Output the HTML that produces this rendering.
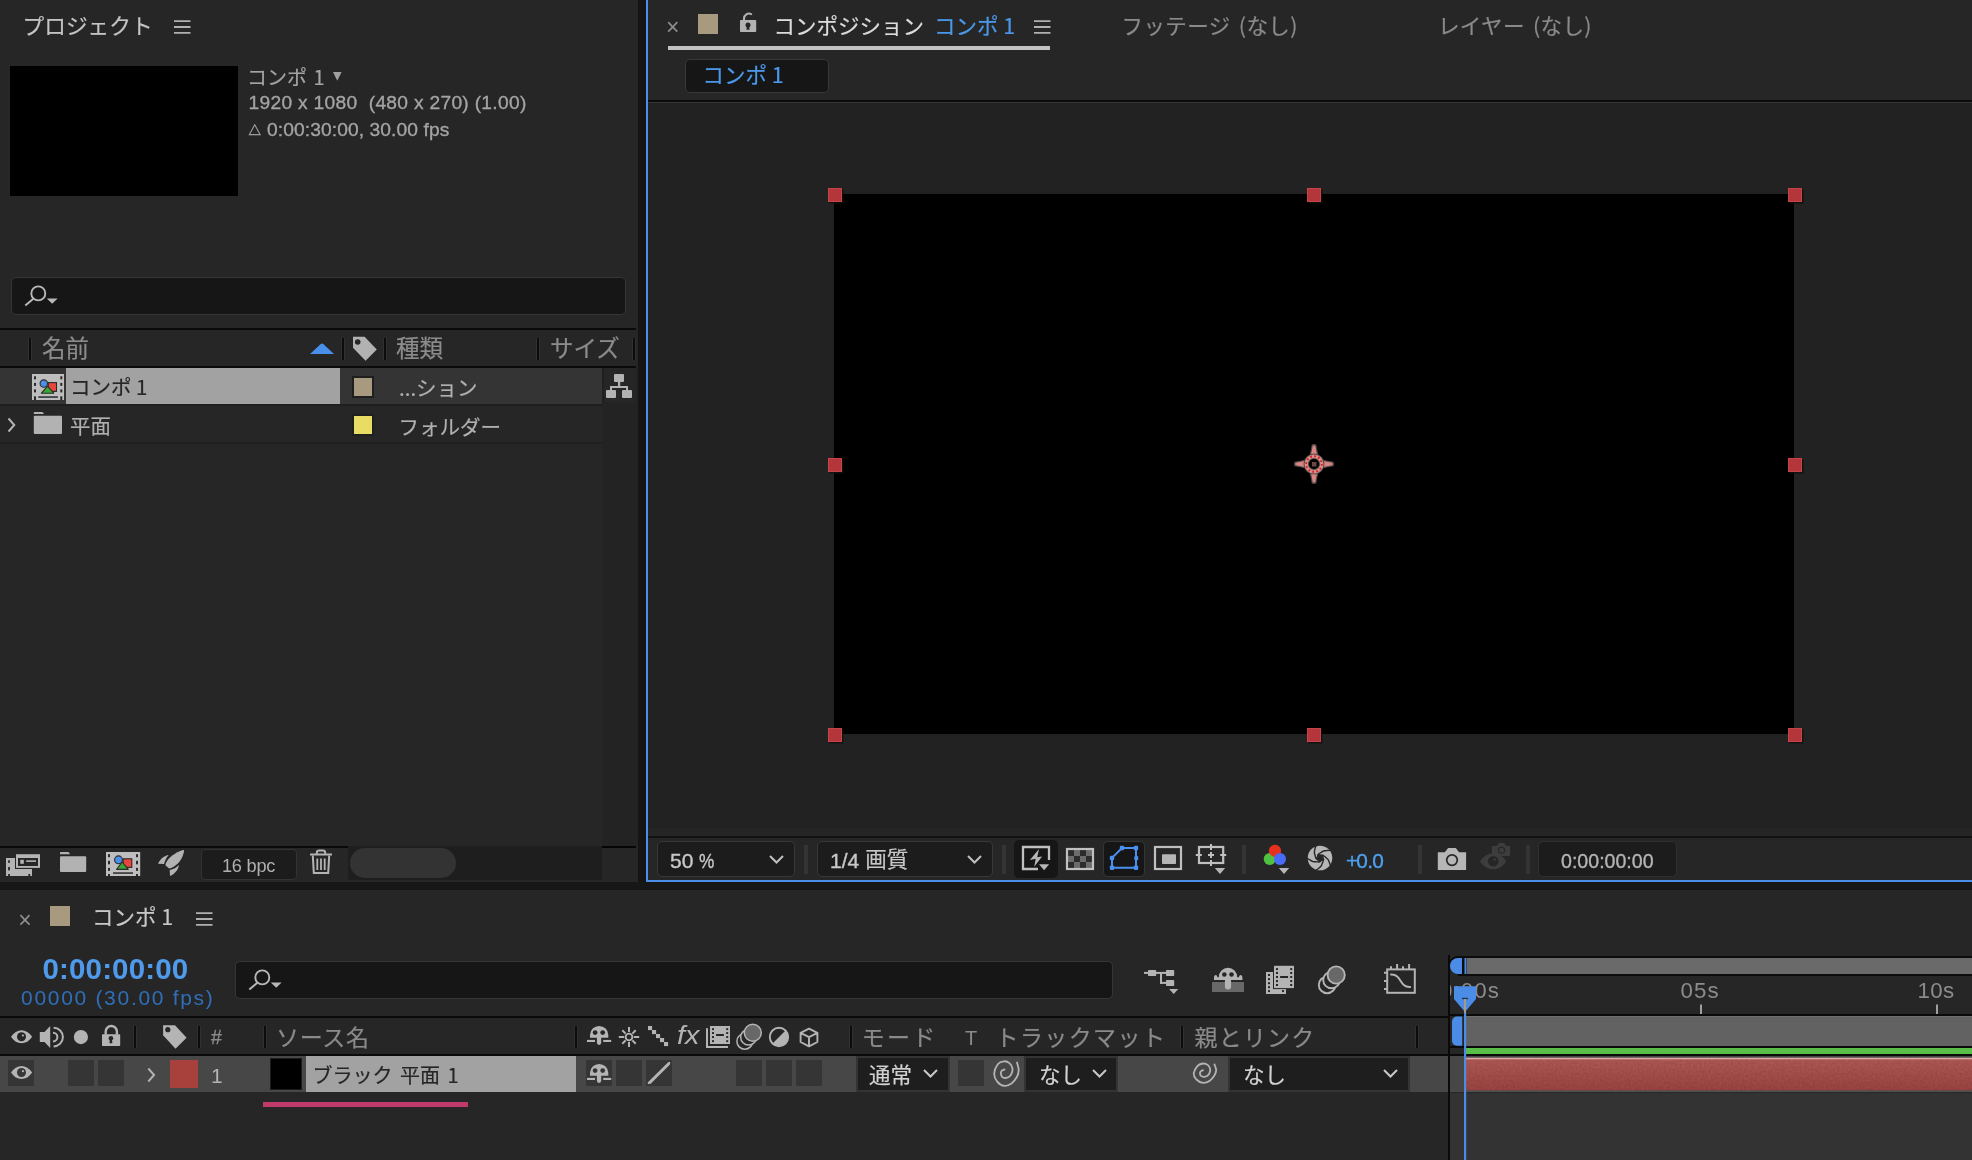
<!DOCTYPE html>
<html lang="ja">
<head>
<meta charset="utf-8">
<title>After Effects</title>
<style>
*{box-sizing:border-box;margin:0;padding:0}
html,body{width:1972px;height:1160px;overflow:hidden;background:#262626}
body{position:relative;font-family:"Liberation Sans","Noto Sans CJK JP",sans-serif;color:#a8a8a8;-webkit-font-smoothing:antialiased}
.a{position:absolute}
.t{position:absolute;white-space:nowrap;line-height:1}
.ac{font-family:"Noto Sans CJK JP","Liberation Sans",sans-serif}
.hv{-webkit-text-stroke:0.350px currentColor}
.jp{-webkit-text-stroke:0.200px currentColor;font-family:"Noto Sans CJK JP","Liberation Sans",sans-serif}
svg{position:absolute;overflow:visible}
.sep{position:absolute;width:4px;margin-left:-1px;background:#0c0c0c;border-left:1px solid #303030;border-right:1px solid #303030}
.rl{font-size:22.300px;color:#8c8c8c;letter-spacing:1.100px}
.sw{position:absolute;width:26px;height:26px;background:#353535}
</style>
</head>
<body>
<div id="root" style="position:absolute;left:0;top:0;width:1972px;height:1160px;will-change:transform">

<!-- ================= PROJECT PANEL ================= -->
<div class="a" id="proj" style="left:0;top:0;width:638px;height:882px;background:#262626"></div>
<div class="t jp" style="left:22.500px;top:13.500px;font-size:21.700px;color:#c4c4c4">プロジェクト</div>
<svg style="left:174px;top:20px" width="17" height="14"><path d="M0 1.2h16.5M0 7h16.5M0 12.8h16.5" stroke="#b0b0b0" stroke-width="1.8" fill="none"/></svg>

<div class="a" style="left:10px;top:66px;width:228px;height:130px;background:#000"></div>
<div class="t jp" id="pname" style="left:247px;top:66.500px;font-size:20px;color:#a4a4a4;word-spacing:2px">コンポ 1</div>
<div class="t hv" id="info1" style="left:248.500px;top:93px;font-size:19.200px;color:#a4a4a4;letter-spacing:0.300px">1920 x 1080&nbsp; (480 x 270) (1.00)</div>
<div class="t hv" id="info2" style="left:267px;top:119.500px;font-size:19.200px;color:#a4a4a4;letter-spacing:0.100px">0:00:30:00, 30.00 fps</div>

<div class="t jp" id="tri" style="left:248.500px;top:124px;font-size:12.500px;color:#a4a4a4;-webkit-text-stroke:0.400px #a4a4a4">△</div>
<svg style="left:333px;top:72px" width="9" height="9"><path d="M0 0h8.600l-4.300 8.800z" fill="#a0a0a0"/></svg>
<!-- search -->
<div class="a" style="left:11px;top:277px;width:615px;height:38px;background:#161616;border:1px solid #353535;border-radius:5px"></div>
<svg style="left:24px;top:283px" width="36" height="24"><circle cx="14.300" cy="10.400" r="7" stroke="#b8b8b8" stroke-width="1.900" fill="none"/><path d="M9.300 15.700L1.300 22.500" stroke="#b8b8b8" stroke-width="2" fill="none"/><path d="M22.800 15.500h10.800l-5.400 5.300z" fill="#b8b8b8"/></svg>

<!-- column header -->
<div class="a" style="left:0;top:328px;width:636px;height:2px;background:#0a0a0a"></div>
<div class="a" style="left:0;top:366px;width:636px;height:2px;background:#0a0a0a"></div>
<div class="sep" style="left:29px;top:338px;height:22px"></div>
<div class="t jp" style="left:42px;top:336px;font-size:23.5px;color:#8c8c8c">名前</div>
<svg style="left:310px;top:343px" width="24" height="11"><path d="M0 11L10.5 1.2Q12 0 13.500 1.200L24 11z" fill="#4a8fea"/></svg>
<div class="sep" style="left:342px;top:338px;height:22px"></div>
<svg style="left:352px;top:336px" width="26" height="26" viewBox="0 0 26 26"><path d="M1 .8h11.600l12.200 12.600-11.200 11.300-12.600-12.900z" fill="#b2b2b2"/><circle cx="5.700" cy="6" r="2.800" fill="#262626"/></svg>
<div class="sep" style="left:384px;top:338px;height:22px"></div>
<div class="t jp" style="left:396px;top:336px;font-size:23.5px;color:#8c8c8c">種類</div>
<div class="sep" style="left:537px;top:338px;height:22px"></div>
<div class="t jp" style="left:550px;top:336px;font-size:23.5px;color:#8c8c8c">サイズ</div>
<div class="sep" style="left:633px;top:338px;height:22px"></div>

<!-- rows -->
<div class="a" style="left:602px;top:368px;width:36px;height:478px;background:#232323"></div><div class="a" style="left:602px;top:368px;width:2px;height:34px;background:#1f1f1f"></div><div class="a" style="left:604px;top:368px;width:32px;height:34px;background:#262626"></div>
<div class="a" style="left:0;top:368px;width:602px;height:36px;background:#343434"></div>
<div class="a" style="left:66px;top:368px;width:274px;height:36px;background:#a2a2a2"></div>
<div class="a" style="left:0;top:404px;width:602px;height:2px;background:#1f1f1f"></div>
<div class="a" style="left:0;top:442px;width:602px;height:2px;background:#202020"></div>
<div class="t jp" style="left:70px;top:376px;font-size:20.500px;color:#262626">コンポ 1</div>
<div class="t jp" style="left:70px;top:414.500px;font-size:20.500px;color:#b0b0b0">平面</div>
<div class="a" style="left:352px;top:376px;width:22px;height:22px;background:#a89a7e;border:2px solid #1f1f1f"></div>
<div class="a" style="left:352px;top:414px;width:22px;height:22px;background:#e8dc64;border:2px solid #1f1f1f"></div>
<div class="t jp" style="left:399px;top:377px;font-size:20.500px;color:#b0b0b0">...ション</div>
<div class="t jp" style="left:398.500px;top:415.500px;font-size:20.500px;color:#b0b0b0">フォルダー</div>
<!--ICONS-PROJ-ROWS-->

<!-- bottom toolbar -->
<div class="a" style="left:0;top:846px;width:348px;height:2px;background:#0a0a0a"></div>
<div class="a" style="left:602px;top:846px;width:34px;height:2px;background:#050505"></div>
<div class="a" style="left:348px;top:846px;width:254px;height:34px;background:#1e1e1e"></div>
<div class="a" style="left:350px;top:848px;width:106px;height:30px;background:#333;border-radius:15px"></div>
<div class="a" style="left:201px;top:849px;width:96px;height:31px;background:#1c1c1c;border:1px solid #333;border-radius:4px"></div>
<div class="t" id="bpc" style="left:222px;top:856.500px;font-size:18.200px;color:#b0b0b0;letter-spacing:-0.250px">16 bpc</div>
<!--ICONS-PROJ-BOTTOM-->

<!-- gaps -->
<div class="a" style="left:638px;top:0;width:8px;height:882px;background:#151515"></div>
<div class="a" style="left:0;top:882px;width:1972px;height:8px;background:#171717"></div>

<!-- ================= COMP PANEL ================= -->
<div class="a" id="comp" style="left:646px;top:0;width:1326px;height:882px;background:#262626;border-left:2px solid #4a8fea;border-bottom:2px solid #4a8fea"></div>
<div class="a" style="left:648px;top:102px;width:1324px;height:734px;background:#222"></div>
<div class="a" style="left:648px;top:100px;width:1324px;height:2px;background:#0c0c0c"></div><div class="a" style="left:648px;top:102px;width:1324px;height:1px;background:#363636"></div>
<div class="a" style="left:648px;top:828px;width:1324px;height:8px;background:#252525"></div>
<div class="a" style="left:648px;top:836px;width:1324px;height:2px;background:#121212"></div>

<!-- tab header -->
<div class="t" style="left:666px;top:16px;font-size:23px;color:#8e8e8e">×</div>
<div class="a" style="left:698px;top:14px;width:20px;height:20px;background:#a89a7e"></div>
<div class="t jp" style="left:773.500px;top:13.500px;font-size:21.500px;color:#dcdcdc">コンポジション</div>
<div class="t jp" style="left:934px;top:13.500px;font-size:21.500px;color:#4a98ea">コンポ 1</div>
<svg style="left:1034px;top:20px" width="17" height="14"><path d="M0 1.2h16.5M0 7h16.5M0 12.8h16.5" stroke="#b0b0b0" stroke-width="1.8" fill="none"/></svg>
<div class="a" style="left:668px;top:46px;width:382px;height:4px;background:#c2c2c2"></div>
<div class="t jp" style="left:1121.500px;top:14px;font-size:21.500px;color:#8a8a8a;word-spacing:3px;letter-spacing:0.400px">フッテージ (なし)</div>
<div class="t jp" style="left:1438px;top:14px;font-size:21.500px;color:#8a8a8a;word-spacing:3px;letter-spacing:0.350px">レイヤー (なし)</div>
<div class="a" style="left:685px;top:59px;width:144px;height:34px;background:#161616;border:1px solid #383838;border-radius:5px"></div>
<div class="t jp" style="left:702.500px;top:62.500px;font-size:21.500px;color:#4a98ea">コンポ 1</div>

<!-- viewer -->
<div class="a" style="left:834px;top:194px;width:960px;height:540px;background:#000"></div>
<!--HANDLES-->

<!-- viewer toolbar -->
<div class="a" style="left:657px;top:841px;width:138px;height:36px;background:#1c1c1c;border:1px solid #383838;border-radius:5px"></div>
<div class="t hv" id="zoomv" style="left:670px;top:850px;font-size:21px;color:#c8c8c8">50<span style="display:inline-block;margin-left:5.500px;transform:scaleX(0.820);transform-origin:0 50%">%</span></div>
<svg style="left:769px;top:855px" width="16" height="9"><path d="M1 1l6.500 6.500L14 1" stroke="#c0c0c0" stroke-width="2" fill="none"/></svg>
<div class="a" style="left:804px;top:845px;width:3.600px;height:29px;background:#343434"></div>
<div class="a" style="left:817px;top:841px;width:176px;height:36px;background:#1c1c1c;border:1px solid #383838;border-radius:5px"></div>
<div class="t hv" id="qual" style="left:830px;top:848px;font-size:21px;color:#c8c8c8">1/4<span class="jp" style="margin-left:6px;position:relative;top:-1px;font-size:21.500px">画質</span></div>
<svg style="left:967px;top:855px" width="16" height="9"><path d="M1 1l6.500 6.500L14 1" stroke="#c0c0c0" stroke-width="2" fill="none"/></svg>
<div class="a" style="left:1002px;top:845px;width:3.600px;height:29px;background:#343434"></div>
<div class="a" style="left:1014px;top:840px;width:44px;height:38px;background:#161616;border-radius:5px"></div>
<div class="a" style="left:1103px;top:841px;width:42px;height:36px;background:#161616;border:1px solid #353535;border-radius:5px"></div>
<div class="a" style="left:1242px;top:845px;width:3.600px;height:29px;background:#343434"></div>
<div class="t hv" id="expv" style="left:1346px;top:850.500px;font-size:20.800px;color:#4da0f0;letter-spacing:-0.700px"><span style="margin-right:-1.200px">+</span>0.0</div>
<div class="a" style="left:1418px;top:845px;width:3.600px;height:29px;background:#343434"></div>
<div class="a" style="left:1526px;top:845px;width:3.600px;height:29px;background:#343434"></div>
<div class="a" style="left:1538px;top:841px;width:139px;height:36px;background:#1c1c1c;border:1px solid #303030;border-radius:5px"></div>
<div class="t hv" id="tcv" style="left:1561px;top:852px;font-size:19.600px;color:#b4b4b4">0:00:00:00</div>
<!--ICONS-VIEWER-->

<!-- ================= TIMELINE PANEL ================= -->
<div class="a" id="tl" style="left:0;top:890px;width:1972px;height:270px;background:#262626"></div>
<div class="t" style="left:18.200px;top:908.500px;font-size:23px;color:#8e8e8e">×</div>
<div class="a" style="left:50px;top:906px;width:20px;height:20px;background:#a89a7e"></div>
<div class="t jp" style="left:92px;top:905px;font-size:21.500px;color:#c8c8c8">コンポ 1</div>
<svg style="left:196px;top:912px" width="17" height="14"><path d="M0 1.2h16.5M0 7h16.5M0 12.8h16.5" stroke="#b0b0b0" stroke-width="1.8" fill="none"/></svg>
<div class="t" id="tc1" style="left:42.500px;top:953.500px;font-size:29.500px;font-weight:bold;color:#4f9aeb;letter-spacing:0.150px">0:00:00:00</div>
<div class="t" id="tc2" style="left:21px;top:986.500px;font-size:21px;color:#2f6fb8;letter-spacing:1.700px">00000 (30.00 fps)</div>
<div class="a" style="left:235px;top:961px;width:878px;height:38px;background:#161616;border:1px solid #353535;border-radius:5px"></div>
<svg style="left:248px;top:967px" width="36" height="24"><circle cx="14.300" cy="10.400" r="7" stroke="#b8b8b8" stroke-width="1.900" fill="none"/><path d="M9.300 15.700L1.300 22.500" stroke="#b8b8b8" stroke-width="2" fill="none"/><path d="M22.800 15.500h10.800l-5.400 5.300z" fill="#b8b8b8"/></svg>
<!--ICONS-TL-TOP-->

<!-- header row -->
<div class="a" style="left:0;top:1016px;width:1448px;height:2px;background:#0a0a0a"></div>
<div class="a" style="left:0;top:1054px;width:1448px;height:2px;background:#0a0a0a"></div>
<div class="sep" style="left:134px;top:1026px;height:22px"></div>
<div class="sep" style="left:198px;top:1026px;height:22px"></div>
<div class="t hv" style="left:211px;top:1028px;font-size:19.500px;color:#8a8a8a">#</div>
<div class="sep" style="left:264px;top:1026px;height:22px"></div>
<div class="t jp" style="left:276px;top:1025px;font-size:23px;color:#8a8a8a;letter-spacing:0.700px">ソース名</div>
<div class="sep" style="left:575px;top:1026px;height:22px"></div>
<div class="sep" style="left:850px;top:1026px;height:22px"></div>
<div class="t jp" style="left:861.800px;top:1025px;font-size:23px;color:#8a8a8a;letter-spacing:2.200px">モード</div>
<div class="t" style="left:965px;top:1028px;font-size:20px;color:#8a8a8a">T</div>
<div class="t jp" style="left:995.500px;top:1025px;font-size:23px;color:#8a8a8a;letter-spacing:1.400px">トラックマット</div>
<div class="sep" style="left:1181px;top:1026px;height:22px"></div>
<div class="t jp" style="left:1194.500px;top:1025px;font-size:23px;color:#8a8a8a;letter-spacing:1.200px">親とリンク</div>
<div class="sep" style="left:1416px;top:1026px;height:22px"></div>
<!--ICONS-TL-HEAD-->

<!-- layer row -->
<div class="a" style="left:0;top:1056px;width:1448px;height:36px;background:#474747"></div>
<div class="sw" style="left:8px;top:1060px"></div>
<div class="sw" style="left:68px;top:1060px"></div>
<div class="sw" style="left:98px;top:1060px"></div>
<svg style="left:147px;top:1067px" width="10" height="17"><path d="M1.300 1.500l5.800 6.500-5.800 6.500" stroke="#b4b4b4" stroke-width="1.900" fill="none"/></svg>
<div class="a" style="left:170px;top:1060px;width:28px;height:28px;background:#a8403c"></div>
<div class="t" style="left:211px;top:1065px;font-size:21px;color:#b4b4b4">1</div>
<div class="a" style="left:270px;top:1058px;width:32px;height:32px;background:#000;border:1px solid #1c1c1c"></div>
<div class="a" style="left:306px;top:1056px;width:270px;height:36px;background:#a2a2a2"></div>
<div class="t jp" style="left:312.500px;top:1065px;font-size:20px;color:#262626;word-spacing:3px">ブラック 平面 1</div>
<div class="a" style="left:263px;top:1102px;width:205px;height:5px;background:#c0396b"></div>
<div class="sw" style="left:586px;top:1060px"></div>
<div class="sw" style="left:616px;top:1060px"></div>
<div class="sw" style="left:646px;top:1060px"></div>
<div class="sw" style="left:736px;top:1060px"></div>
<div class="sw" style="left:766px;top:1060px"></div>
<div class="sw" style="left:796px;top:1060px"></div>
<svg style="left:646px;top:1060px" width="26" height="26"><path d="M3.5 23L23 3.500" stroke="#b4b4b4" stroke-width="2.600" fill="none"/></svg>
<div class="a" style="left:856px;top:1056px;width:94px;height:36px;background:#1e1e1e;border:2px solid #343434"></div>
<div class="t jp" style="left:869px;top:1063px;font-size:21.500px;color:#d2d2d2">通常</div>
<svg style="left:923px;top:1069px" width="16" height="9"><path d="M1 1l6.500 6.500L14 1" stroke="#c8c8c8" stroke-width="2" fill="none"/></svg>

<div class="sw" style="left:958px;top:1060px"></div>
<div class="a" style="left:1024px;top:1056px;width:94px;height:36px;background:#1e1e1e;border:2px solid #343434"></div>
<div class="t jp" style="left:1039px;top:1063px;font-size:21.500px;color:#d2d2d2">なし</div>
<svg style="left:1092px;top:1069px" width="16" height="9"><path d="M1 1l6.500 6.500L14 1" stroke="#c8c8c8" stroke-width="2" fill="none"/></svg>
<div class="a" style="left:1228px;top:1056px;width:182px;height:36px;background:#1e1e1e;border:2px solid #343434"></div>
<div class="t jp" style="left:1243px;top:1063px;font-size:21.500px;color:#d2d2d2">なし</div>
<svg style="left:1383px;top:1069px" width="16" height="9"><path d="M1 1l6.500 6.500L14 1" stroke="#c8c8c8" stroke-width="2" fill="none"/></svg>
<!--ICONS-TL-ROW-->

<!-- time area -->
<div class="a" style="left:1450px;top:955px;width:522px;height:205px;background:#262626"></div>
<div class="a" style="left:1450px;top:1092px;width:522px;height:68px;background:#333"></div>
<div class="a" style="left:1448px;top:955px;width:2px;height:205px;background:#0a0a0a"></div>
<div class="a" style="left:1450px;top:976px;width:522px;height:38px;overflow:hidden"><div class="t rl" style="left:-10px;top:4px">0:00s</div><div class="t rl" style="left:230.500px;top:4px">05s</div><div class="t rl" style="left:467.500px;top:4px;letter-spacing:0.300px">10s</div></div>
<svg id="ov" style="left:0;top:0" width="1972" height="1160" viewBox="0 0 1972 1160">
<defs>
<filter id="noise" x="0" y="0" width="100%" height="100%"><feTurbulence type="fractalNoise" baseFrequency="0.45" numOctaves="1" seed="3" result="n"/><feColorMatrix in="n" type="matrix" values="0 0 0 0 0  0 0 0 0 0  0 0 0 0 0  0.5 0 0 0 -0.13"/><feComposite in2="SourceGraphic" operator="in"/></filter>
<linearGradient id="rg" x1="0" y1="0" x2="0" y2="1"><stop offset="0" stop-color="#b25a56"/><stop offset="1" stop-color="#9c4442"/></linearGradient>
</defs>
<!-- ===== project rows ===== -->
<g id="ci1">
<rect x="32" y="374" width="32" height="26" fill="#bebebe"/>
<g fill="#2a2a2a"><rect x="34" y="376.300" width="2" height="3"/><rect x="34" y="382.900" width="2" height="3"/><rect x="34" y="389.400" width="2" height="3"/><rect x="34" y="396.300" width="2" height="3.700"/>
<rect x="60.300" y="376.300" width="2" height="3"/><rect x="60.300" y="382.900" width="2" height="3"/><rect x="60.300" y="389.400" width="2" height="3"/><rect x="60.300" y="396.300" width="2" height="3.700"/>
<rect x="38.300" y="396.300" width="19.600" height="1.500"/></g>
<rect x="48.300" y="382.600" width="8.200" height="8.800" fill="#e8463c" stroke="#2a2a2a" stroke-width="1.100"/>
<circle cx="43.800" cy="383.600" r="3.700" fill="#4a90ea" stroke="#2a2a2a" stroke-width="1.100"/>
<path d="M47.600 386.200L53.800 393.200H41.400z" fill="#3aa636" stroke="#2a2a2a" stroke-width="1.100" stroke-linejoin="round"/>
</g>
<path d="M33.800 414v-1.200q0-.9.900-.9h7.300q.7 0 1.100.6l.9 1.500z" fill="#b2b2b2"/>
<rect x="33.800" y="415.700" width="28.200" height="18.300" rx="1" fill="#b2b2b2"/>
<path d="M8.500 418.500l5.800 6.500-5.800 6.500" stroke="#b4b4b4" stroke-width="2" fill="none"/>
<!-- flowchart -->
<g fill="#b2b2b2"><rect x="614" y="374" width="10" height="8" rx="1"/><rect x="606" y="390" width="10" height="8" rx="1"/><rect x="622" y="390" width="10" height="8" rx="1"/>
<rect x="618" y="381" width="2.200" height="6"/><rect x="610" y="386" width="18" height="2"/><rect x="610" y="386" width="2" height="5"/><rect x="626" y="386" width="2" height="5"/></g>

<!-- ===== project bottom toolbar ===== -->
<g id="if">
<path d="M6 858h9v11h17v7h-26z" fill="#b4b4b4"/>
<g fill="#262626"><rect x="8.100" y="860.300" width="1.800" height="2.500"/><rect x="8.100" y="866.900" width="1.800" height="3.500"/><rect x="8.100" y="874" width="1.800" height="2"/><rect x="28.400" y="874" width="1.800" height="2"/></g>
<rect x="15" y="853.200" width="26" height="15.700" fill="#262626"/>
<rect x="16" y="854.200" width="24" height="13.700" fill="#b4b4b4"/>
<rect x="18" y="858" width="20" height="8" fill="#262626"/>
<rect x="20.300" y="859.800" width="3.500" height="4" fill="#b4b4b4"/><rect x="26.200" y="860.300" width="9.800" height="1.600" fill="#b4b4b4"/>
</g>
<path d="M60 854.200v-1.300q0-.9.900-.9h7.100q.7 0 1.100.6l.9 1.600z" fill="#b2b2b2"/>
<rect x="60" y="856.200" width="26.200" height="15.800" rx="1" fill="#b2b2b2"/>
<g id="ci2">
<rect x="106" y="852" width="34.200" height="24" fill="#bebebe"/>
<g fill="#2a2a2a"><rect x="108" y="854.200" width="2" height="3"/><rect x="108" y="860.800" width="2" height="3.500"/><rect x="108" y="867.900" width="2" height="3"/><rect x="108" y="874" width="2" height="2"/>
<rect x="136" y="854.200" width="2" height="3"/><rect x="136" y="860.800" width="2" height="3.500"/><rect x="136" y="867.900" width="2" height="3"/><rect x="136" y="874" width="2" height="2"/>
<rect x="113" y="872.300" width="20" height="1.500"/></g>
<rect x="123.200" y="858.800" width="8.600" height="8.600" fill="#e8463c" stroke="#2a2a2a" stroke-width="1.100"/>
<circle cx="118.500" cy="859.800" r="3.900" fill="#4a90ea" stroke="#2a2a2a" stroke-width="1.100"/>
<path d="M122.200 862L128.300 869.400H116.600z" fill="#3aa636" stroke="#2a2a2a" stroke-width="1.100" stroke-linejoin="round"/>
</g>
<!-- rocket -->
<g fill="#b2b2b2">
<path d="M184.100 849.900C179 850.300 170.500 855.500 167 861C166 862.700 165.600 864 165.400 865.300L169 868.600C172 868 174.500 866.500 176.900 864.300C181 860.500 183.800 855 184.100 849.900z"/>
<path d="M158 863.700C159.300 861 161 859 162.500 857.800C164.500 856.300 166.500 855.400 168.700 855.100C167.300 856.500 166.300 858 165.700 859.400C165 861 164.400 862.500 164.100 864z"/>
<path d="M170 876L169.700 869.900C173.500 869.300 176.500 867.500 178.900 865C178.800 866.800 178.200 868.500 177.200 869.900C175.500 872.500 173 874.600 170 876z"/>
</g>
<!-- trash -->
<g stroke="#b4b4b4" fill="none" stroke-width="2"><path d="M310 854.500h22"/><path d="M316.800 854v-1.200a2.400 2.400 0 0 1 2.400-2.400h3.600a2.400 2.400 0 0 1 2.400 2.400v1.200"/><path d="M312.800 855.500l1 17.500h14.400l1-17.500"/><path d="M317.300 858.500v11.500M321 858.500v11.500M324.700 858.500v11.500" stroke-width="1.800"/></g>

<!-- ===== tab headers ===== -->
<g><rect x="740" y="20" width="16.200" height="12" rx="0.800" fill="#b2b2b2"/><path d="M744 20.500V18.600A5 5 0 0 1 751.200 14.100" stroke="#b2b2b2" stroke-width="2.100" fill="none" stroke-linecap="round"/><circle cx="748" cy="25" r="2.500" fill="#262626"/><path d="M746.900 25.500h2.200l.5 4.300h-3.200z" fill="#262626"/></g>
<!-- ===== viewer handles ===== -->
<g fill="#101010" opacity="0.85"><rect x="829.5" y="189.5" width="14" height="14"/><rect x="1308.5" y="189.5" width="14" height="14"/><rect x="1789.5" y="189.5" width="14" height="14"/><rect x="829.5" y="459.5" width="14" height="14"/><rect x="1789.5" y="459.5" width="14" height="14"/><rect x="829.5" y="729.5" width="14" height="14"/><rect x="1308.5" y="729.5" width="14" height="14"/><rect x="1789.5" y="729.5" width="14" height="14"/></g>
<g fill="#b4363a" stroke="#c84448" stroke-width="1">
<rect x="828.500" y="188.500" width="13" height="13"/><rect x="1307.500" y="188.500" width="13" height="13"/><rect x="1788.500" y="188.500" width="13" height="13"/>
<rect x="828.500" y="458.500" width="13" height="13"/><rect x="1788.500" y="458.500" width="13" height="13"/>
<rect x="828.500" y="728.500" width="13" height="13"/><rect x="1307.500" y="728.500" width="13" height="13"/><rect x="1788.500" y="728.500" width="13" height="13"/>
</g>
<!-- anchor -->
<g>
<g fill="#d88482" stroke="#4e4848" stroke-width="1.200" stroke-linejoin="round">
<path d="M1312.300 444.800h3.400l2.300 12h-8z"/><path d="M1312.300 483.200h3.400l2.300-12h-8z"/><path d="M1294.800 462.300v3.400l12 2.300v-8z"/><path d="M1333.200 462.300v3.400l-12 2.300v-8z"/></g>
<circle cx="1314" cy="464" r="7.800" stroke="#4e4848" stroke-width="5.400" fill="none"/>
<circle cx="1314" cy="464" r="7.800" stroke="#dc8a88" stroke-width="3.400" fill="none"/>
<circle cx="1314" cy="464" r="7.800" stroke="#c82222" stroke-width="1.900" stroke-dasharray="1.700 2.380" fill="none"/>
<rect x="1312" y="462" width="4.500" height="4.500" fill="#6a4644"/>
</g>

<!-- ===== viewer toolbar icons ===== -->
<path d="M1038 869h-15v-22h26v13" stroke="#c0c0c0" stroke-width="2.300" fill="none"/>
<path d="M1039 849.100l-9.100 10.900 5.800-1.200-1.500 7.900 7.900-10.300-4.900 .9z" fill="#b6b6b6"/>
<path d="M1039 864.200h10.200l-5.100 6z" fill="#b6b6b6"/>
<g>
<rect x="1067" y="849" width="26" height="20" fill="#2c2c2c"/>
<g fill="#6c6c6c"><rect x="1074" y="850" width="6" height="6"/><rect x="1086" y="850" width="6" height="6"/><rect x="1068" y="856" width="6" height="6"/><rect x="1080" y="856" width="6" height="6"/><rect x="1074" y="862" width="6" height="6"/><rect x="1086" y="862" width="6" height="6"/></g>
<rect x="1067" y="849" width="26" height="20" fill="none" stroke="#c0c0c0" stroke-width="2.200"/>
</g>
<g stroke="#4a90f0" fill="#4a90f0"><path d="M1122 848h14v19.800h-24v-9.900z" fill="none" stroke-width="2"/>
<g stroke="none"><rect x="1119.800" y="845.800" width="4.400" height="4.400" rx="1.200"/><rect x="1133.800" y="845.800" width="4.400" height="4.400" rx="1.200"/><rect x="1134.300" y="855.900" width="3.900" height="4.400" rx="1"/><rect x="1133.800" y="865.600" width="4.400" height="4.400" rx="1.200"/><rect x="1109.800" y="865.600" width="4.400" height="4.400" rx="1.200"/><rect x="1109.800" y="855.700" width="4.400" height="4.400" rx="1.200"/></g></g>
<rect x="1155" y="847" width="26" height="22" fill="none" stroke="#c0c0c0" stroke-width="2.200"/>
<rect x="1162" y="854.300" width="14" height="9.700" rx="0.800" fill="#b6b6b6"/>
<g stroke="#c0c0c0" fill="none" stroke-width="2.200"><rect x="1199" y="847" width="24.200" height="16"/><path d="M1211 844v6M1211 860v6M1195.800 855h6M1220.200 855h6M1211 852v6M1208 855h6" stroke-width="2"/></g>
<path d="M1214.800 868h10.400l-5.200 6z" fill="#b6b6b6"/>
<circle cx="1269.700" cy="859" r="6" fill="#50c040"/><circle cx="1275" cy="850.800" r="6.100" fill="#e8301e"/><circle cx="1280" cy="859" r="6" fill="#4a6af8"/>
<path d="M1278.800 868h10.400l-5.200 6z" fill="#b6b6b6"/>
<!-- aperture -->
<g><circle cx="1320" cy="858" r="12.300" fill="#b6b6b6"/>
<path d="M1315.9 846.1C1315.7 846.6 1315.1 848.4 1314.8 849.4C1314.6 850.5 1314.4 851.5 1314.4 852.4C1314.4 853.3 1314.8 854.3 1315.0 855.0C1315.2 855.8 1315.3 856.3 1315.5 857.0C1315.7 857.6 1316.1 858.6 1316.2 858.9M1330.1 850.4C1329.5 850.4 1327.6 850.4 1326.6 850.5C1325.5 850.5 1324.5 850.6 1323.6 851.0C1322.7 851.3 1322.0 851.9 1321.3 852.3C1320.6 852.8 1320.2 853.0 1319.6 853.4C1319.0 853.8 1318.3 854.5 1318.0 854.7M1330.3 865.2C1330.1 864.7 1329.6 862.9 1329.2 861.9C1328.8 860.9 1328.4 860.0 1327.8 859.2C1327.2 858.5 1326.4 858.0 1325.8 857.5C1325.2 857.0 1324.8 856.6 1324.2 856.2C1323.7 855.8 1322.8 855.2 1322.6 855.1M1316.3 870.0C1316.8 869.7 1318.3 868.7 1319.1 868.0C1319.9 867.3 1320.7 866.6 1321.2 865.8C1321.8 865.0 1322.0 864.1 1322.3 863.3C1322.6 862.6 1322.8 862.1 1323.0 861.5C1323.2 860.8 1323.5 859.8 1323.6 859.5M1307.4 858.2C1307.9 858.6 1309.3 859.7 1310.3 860.2C1311.2 860.8 1312.1 861.3 1313.0 861.6C1313.9 861.8 1314.8 861.7 1315.6 861.8C1316.4 861.9 1317.0 861.9 1317.6 861.9C1318.3 862.0 1319.3 861.9 1319.7 861.9" stroke="#262626" stroke-width="1.400" fill="none" stroke-linecap="round"/>
<path d="M1316.200 858.900L1318 854.700L1322.600 855.100L1323.600 859.500L1319.700 861.900z" fill="#262626" stroke="#262626" stroke-width="1" stroke-linejoin="round"/></g>
<!-- camera -->
<path d="M1437.800 852.200h7l3.300-4.200h7.700l3.300 4.200h7v17.800h-28.300z" fill="#b6b6b6"/>
<circle cx="1452" cy="860.100" r="5.300" fill="#b6b6b6" stroke="#262626" stroke-width="1.700"/>
<!-- eye cam (dim) -->
<g fill="#3d3d3d"><path d="M1492 846.100h5l1.800-3h5.500l1.800 3h4v9.800h-18.100z"/><circle cx="1501.500" cy="850.200" r="3.600" fill="#262626"/><circle cx="1501.500" cy="850.200" r="2.500"/>
<path d="M1480 861.200C1487 850.500 1499.500 850.500 1506.200 861.200C1499.500 872 1487 872 1480 861.200z"/><circle cx="1493.200" cy="861.200" r="5.300" fill="#262626"/><circle cx="1494.800" cy="859.600" r="1.200"/></g>
<!-- ===== timeline top icons ===== -->
<g fill="#b4b4b4"><rect x="1144" y="971.900" width="5" height="2"/><rect x="1148" y="970" width="8.200" height="6" rx="0.800"/><rect x="1156" y="971.900" width="11" height="2"/><rect x="1166" y="970" width="8.200" height="6" rx="0.800"/><rect x="1160" y="972" width="2" height="11.900"/><rect x="1160" y="981.900" width="7" height="2"/><rect x="1166" y="980.100" width="8.200" height="6" rx="0.800"/><path d="M1169.100 989.100h9.200l-4.600 5z"/></g>
<!-- shy with base -->
<g><rect x="1212" y="982" width="32" height="10" fill="#686868"/>
<path d="M1218.800 977.300a9.200 9.500 0 0 1 18.400 0l1.700 0c.3-1.700 .9-2.400 1.800-2.400s1.600 1 1.700 2.400v2.700h-28.400v-2.700c.1-1.400 .8-2.400 1.700-2.400s1.500 .7 1.800 2.400z" fill="#b4b4b4"/>
<rect x="1224.900" y="978" width="6.200" height="11.600" rx="3" fill="#b4b4b4"/>
<circle cx="1224.300" cy="974.500" r="2.300" fill="#262626"/><circle cx="1231.500" cy="974.500" r="2.300" fill="#262626"/></g>
<!-- film stack -->
<g><path d="M1266 972h8v17h12v5h-20z" fill="#b4b4b4"/>
<g fill="#262626"><rect x="1268" y="974" width="2" height="2"/><rect x="1268" y="978.100" width="2" height="2"/><rect x="1268" y="982.200" width="2" height="2"/><rect x="1268" y="986.200" width="2" height="2"/><rect x="1268" y="990.100" width="2" height="2"/><rect x="1282" y="990.100" width="2" height="2"/></g>
<rect x="1273" y="964.800" width="22" height="24.300" fill="#262626"/>
<rect x="1274" y="965.800" width="20" height="22.300" fill="#b4b4b4"/>
<g fill="#262626"><rect x="1276" y="968.100" width="2" height="2"/><rect x="1276" y="972" width="2" height="2"/><rect x="1276" y="976" width="2" height="2"/><rect x="1276" y="980.100" width="2" height="2"/><rect x="1276" y="984" width="2" height="2"/>
<rect x="1290.200" y="968.100" width="2" height="2"/><rect x="1290.200" y="972" width="2" height="2"/><rect x="1290.200" y="976" width="2" height="2"/><rect x="1290.200" y="980.100" width="2" height="2"/><rect x="1290.200" y="984" width="2" height="2"/>
<rect x="1280.100" y="976" width="8" height="2"/></g></g>
<!-- motion blur -->
<g stroke="#b4b4b4" stroke-width="1.900"><circle cx="1327.100" cy="984.900" r="8.300" fill="#262626"/><circle cx="1331.500" cy="980" r="8.300" fill="#262626"/><circle cx="1336.200" cy="975" r="8.600" fill="#686868"/></g>
<!-- graph editor -->
<g stroke="#b4b4b4" stroke-width="2" fill="none"><rect x="1387.200" y="969.400" width="27.600" height="23.400"/><path d="M1391 966.200v3M1397.100 964v5M1403 966.200v3M1409.100 964v5M1384 972.800h3M1384 981.100h3M1384 988.900h3" /><path d="M1390.200 974.600h1.500C1401.500 974.600 1399.500 987 1409.400 987h1.500"/></g>

<!-- ===== timeline header icons ===== -->
<g id="eye"><path d="M11 1036.800C16.500 1028 26.500 1028 32.200 1036.800C26.500 1045.500 16.500 1045.500 11 1036.800z" fill="#b4b4b4"/><circle cx="21.500" cy="1036.800" r="4.500" fill="#262626"/><circle cx="22.900" cy="1035.500" r="1.100" fill="#b4b4b4"/></g>
<g><path d="M39.800 1032h4.700l5.700-5.900v21.900l-5.700-5.900h-4.700z" fill="#b4b4b4"/><path d="M53.600 1027.700A9.300 9.350 0 0 1 53.600 1046.400M53 1032.700A4.400 4.350 0 0 1 53 1041.400" stroke="#b4b4b4" stroke-width="2" fill="none"/></g>
<circle cx="80.900" cy="1037.100" r="7.100" fill="#b4b4b4"/>
<g><rect x="102" y="1034.300" width="18.200" height="11.700" rx="0.800" fill="#b4b4b4"/><path d="M105.700 1034.800v-3.200a5.600 5.600 0 0 1 11.200 0v3.200" stroke="#b4b4b4" stroke-width="2.400" fill="none"/><circle cx="110.900" cy="1038.300" r="2.300" fill="#262626"/><path d="M109.900 1039h2l.5 4.200h-3z" fill="#262626"/></g>
<path d="M163.100 1025.300h11.900l11.600 12.500-11.100 10.900-12.400-13.400z" fill="#b4b4b4"/><circle cx="167.800" cy="1029.700" r="2.600" fill="#262626"/>

<!-- shy header -->
<g id="shy"><path d="M590 1037.700v-2.700a9.150 9.150 0 0 1 18.300 0v2.700z" fill="#b4b4b4"/><rect x="596.900" y="1035" width="4.300" height="9.900" rx="2.100" fill="#b4b4b4"/><circle cx="595.100" cy="1032.600" r="2.400" fill="#262626"/><circle cx="602.700" cy="1032.600" r="2.400" fill="#262626"/><rect x="587" y="1039.900" width="8" height="2.100" fill="#b4b4b4"/><rect x="603.200" y="1039.900" width="8" height="2.100" fill="#b4b4b4"/></g>
<!-- sun -->
<g stroke="#b4b4b4" fill="none"><circle cx="629" cy="1037" r="3.400" stroke-width="1.900"/><path d="M629 1027v5M629 1042v5M618.800 1037h5.300M633.900 1037h5.300M622.300 1030.300l3.300 3.300M632.400 1040.400l3.300 3.300M635.700 1030.300l-3.300 3.300M625.600 1040.400l-3.300 3.300" stroke-width="2"/></g>
<!-- dotted diag -->
<g fill="#b4b4b4"><rect x="648" y="1026" width="4.100" height="4.100"/><rect x="652" y="1030" width="4.100" height="4.100"/><rect x="656" y="1034" width="4.100" height="4.100"/><rect x="660" y="1038" width="4.100" height="4.100"/><rect x="664" y="1042" width="4.100" height="4.100"/></g>
<text x="677" y="1044.300" font-family="Liberation Sans, sans-serif" font-style="italic" font-size="26.500" fill="#b4b4b4" textLength="22.500" lengthAdjust="spacingAndGlyphs">fx</text>
<!-- frame blend -->
<g><path d="M707 1028.200v18.800h21" stroke="#b4b4b4" stroke-width="2" fill="none"/><rect x="710" y="1026" width="20" height="18" fill="#b4b4b4"/>
<g fill="#262626"><rect x="712" y="1028.200" width="2" height="1.900"/><rect x="712" y="1032.100" width="2" height="1.900"/><rect x="712" y="1036.100" width="2" height="1.900"/><rect x="712" y="1040.200" width="2" height="1.900"/><rect x="726.200" y="1028.200" width="2" height="1.900"/><rect x="726.200" y="1032.100" width="2" height="1.900"/><rect x="726.200" y="1036.100" width="2" height="1.900"/><rect x="726.200" y="1040.200" width="2" height="1.900"/><rect x="716.100" y="1034" width="7.800" height="2"/></g></g>
<!-- motion blur small -->
<g stroke="#b4b4b4" stroke-width="1.500"><circle cx="744.800" cy="1041.300" r="7.900" fill="#262626"/><circle cx="748.600" cy="1037.200" r="7.900" fill="#262626"/><circle cx="752.800" cy="1032.700" r="8.500" fill="#686868"/></g>
<!-- half circle -->
<g><circle cx="779" cy="1037" r="9.200" fill="none" stroke="#b4b4b4" stroke-width="1.900"/><path d="M772.500 1043.500A9.200 9.200 0 0 0 785.500 1030.500z" fill="#b4b4b4"/></g>
<!-- cube -->
<path d="M809 1028.600l8.400 4.200v9.200l-8.400 4.300-8.400-4.300v-9.200zM800.600 1032.800l8.400 4.300 8.400-4.300M809 1037.100v9.200" stroke="#b4b4b4" stroke-width="1.900" fill="none" stroke-linejoin="round"/>

<!-- ===== layer row icons ===== -->
<g transform="translate(0 35.700)"><path d="M11 1036.800C16.500 1028 26.500 1028 32.200 1036.800C26.500 1045.500 16.500 1045.500 11 1036.800z" fill="#b4b4b4"/><circle cx="21.500" cy="1036.800" r="4.500" fill="#373737"/><circle cx="22.900" cy="1035.500" r="1.100" fill="#b4b4b4"/></g>
<g transform="translate(0 38)"><path d="M590 1037.700v-2.700a9.150 9.150 0 0 1 18.300 0v2.700z" fill="#b4b4b4"/><rect x="596.900" y="1035" width="4.300" height="9.900" rx="2.100" fill="#b4b4b4"/><circle cx="595.100" cy="1032.600" r="2.400" fill="#333"/><circle cx="602.700" cy="1032.600" r="2.400" fill="#333"/><rect x="587" y="1039.900" width="8" height="2.100" fill="#b4b4b4"/><rect x="603.200" y="1039.900" width="8" height="2.100" fill="#b4b4b4"/></g>
<path d="M648.800 1083L669.200 1063" stroke="#b4b4b4" stroke-width="2.400" stroke-linecap="round" fill="none"/>
<g stroke="#b4b4b4" stroke-width="1.800" fill="none" stroke-linecap="round">
<path d="M1004.500 1069.500C1004.000 1069.700 1002.100 1070.300 1001.500 1071.000C1000.900 1071.700 1000.800 1072.800 1000.900 1073.700C1001.000 1074.700 1001.400 1076.100 1002.100 1076.800C1002.800 1077.500 1004.000 1077.900 1005.100 1078.000C1006.200 1078.000 1007.700 1077.800 1008.800 1077.100C1009.800 1076.400 1010.900 1075.200 1011.500 1073.700C1012.100 1072.300 1012.800 1070.000 1012.400 1068.300C1012.100 1066.500 1010.800 1064.300 1009.400 1063.100C1008.000 1061.900 1005.800 1061.100 1003.900 1061.300C1002.000 1061.500 999.400 1062.200 997.800 1064.300C996.200 1066.400 994.300 1070.800 994.200 1073.700C994.100 1076.600 995.500 1079.600 997.200 1081.600C998.900 1083.700 1002.100 1085.700 1004.500 1085.900C1007.000 1086.200 1009.700 1084.700 1011.800 1083.200C1013.900 1081.600 1015.800 1079.000 1017.000 1076.800C1018.100 1074.600 1018.700 1072.500 1018.700 1070.100C1018.700 1067.700 1017.300 1063.700 1017.000 1062.500"/>
<path d="M1203.100 1070.100C1202.700 1070.300 1201.200 1070.700 1200.700 1071.300C1200.200 1071.900 1199.900 1073.000 1200.000 1073.700C1200.000 1074.500 1200.400 1075.400 1201.000 1075.900C1201.600 1076.400 1202.700 1076.800 1203.700 1076.800C1204.700 1076.800 1206.100 1076.500 1207.100 1075.900C1208.000 1075.300 1209.000 1074.300 1209.500 1073.100C1210.000 1072.000 1210.400 1070.200 1210.100 1068.900C1209.800 1067.500 1208.900 1065.800 1207.700 1064.900C1206.500 1064.000 1204.800 1063.400 1203.100 1063.500C1201.400 1063.700 1199.200 1064.200 1197.600 1065.800C1196.100 1067.500 1193.900 1071.200 1193.700 1073.400C1193.500 1075.700 1194.900 1077.900 1196.400 1079.500C1198.000 1081.100 1200.900 1082.700 1203.100 1082.900C1205.400 1083.100 1207.900 1082.000 1209.800 1080.700C1211.700 1079.500 1213.300 1077.300 1214.400 1075.600C1215.400 1073.800 1216.200 1072.000 1216.200 1070.100C1216.200 1068.200 1214.700 1065.300 1214.400 1064.300"/>
</g>
<!-- ===== time area ===== -->
<path d="M1448 1160V966a10 10 0 0 1 10-10h514v2h-514a8 8 0 0 0-8 8v194z" fill="#0a0a0a"/>
<rect x="1458" y="956" width="514" height="20" fill="#0c0c0c"/>
<rect x="1467" y="958" width="505" height="16" fill="#6a6a6a"/>
<path d="M1462 958v16h-4a8 8 0 0 1 0-16z" fill="#4a8ce6"/>
<rect x="1464.500" y="958" width="2" height="16" fill="#4a8ce6"/>
<rect x="1450" y="1014" width="522" height="2" fill="#0a0a0a"/>
<rect x="1466" y="1016" width="506" height="30" fill="#626262"/>
<rect x="1466" y="1016" width="506" height="1" fill="#6e6e6e"/>
<path d="M1462.200 1016.500v29.200h-5.200a5 5 0 0 1-5-5v-19.200a5 5 0 0 1 5-5z" fill="#4a8ce6"/>
<rect x="1450" y="1046" width="522" height="2" fill="#0a0a0a"/>
<rect x="1466" y="1048" width="506" height="6" fill="#58be48"/>
<rect x="1450" y="1054" width="522" height="2" fill="#0a0a0a"/>
<rect x="1450" y="1056" width="522" height="36" fill="#474747"/>
<rect x="1466" y="1058" width="506" height="32.500" fill="url(#rg)"/>
<rect x="1466" y="1058" width="506" height="32.500" fill="#8a3432" filter="url(#noise)" opacity="0.400"/>
<rect x="1466" y="1057.700" width="506" height="1.600" fill="#dcaaa6"/>
<rect x="1466" y="1090.500" width="506" height="1.500" fill="#505050"/>
<rect x="1450" y="1092" width="522" height="1.200" fill="#2a2a2a"/>
<rect x="1700" y="1004.500" width="2" height="9.500" fill="#a0a0a0"/>
<rect x="1936" y="1004.500" width="2" height="9.500" fill="#a0a0a0"/>
<!-- playhead -->
<path d="M1454 986.300h22v12.700l-11 13-11-13z" fill="#4a8ce6"/>
<rect x="1462" y="997.800" width="6" height="1.400" fill="#20344e"/>
<rect x="1464" y="999" width="2" height="14" fill="#a69a86"/>
<rect x="1464" y="1013" width="2.200" height="147" fill="#4a8ce6"/>
</svg>


</div>
</body>
</html>
